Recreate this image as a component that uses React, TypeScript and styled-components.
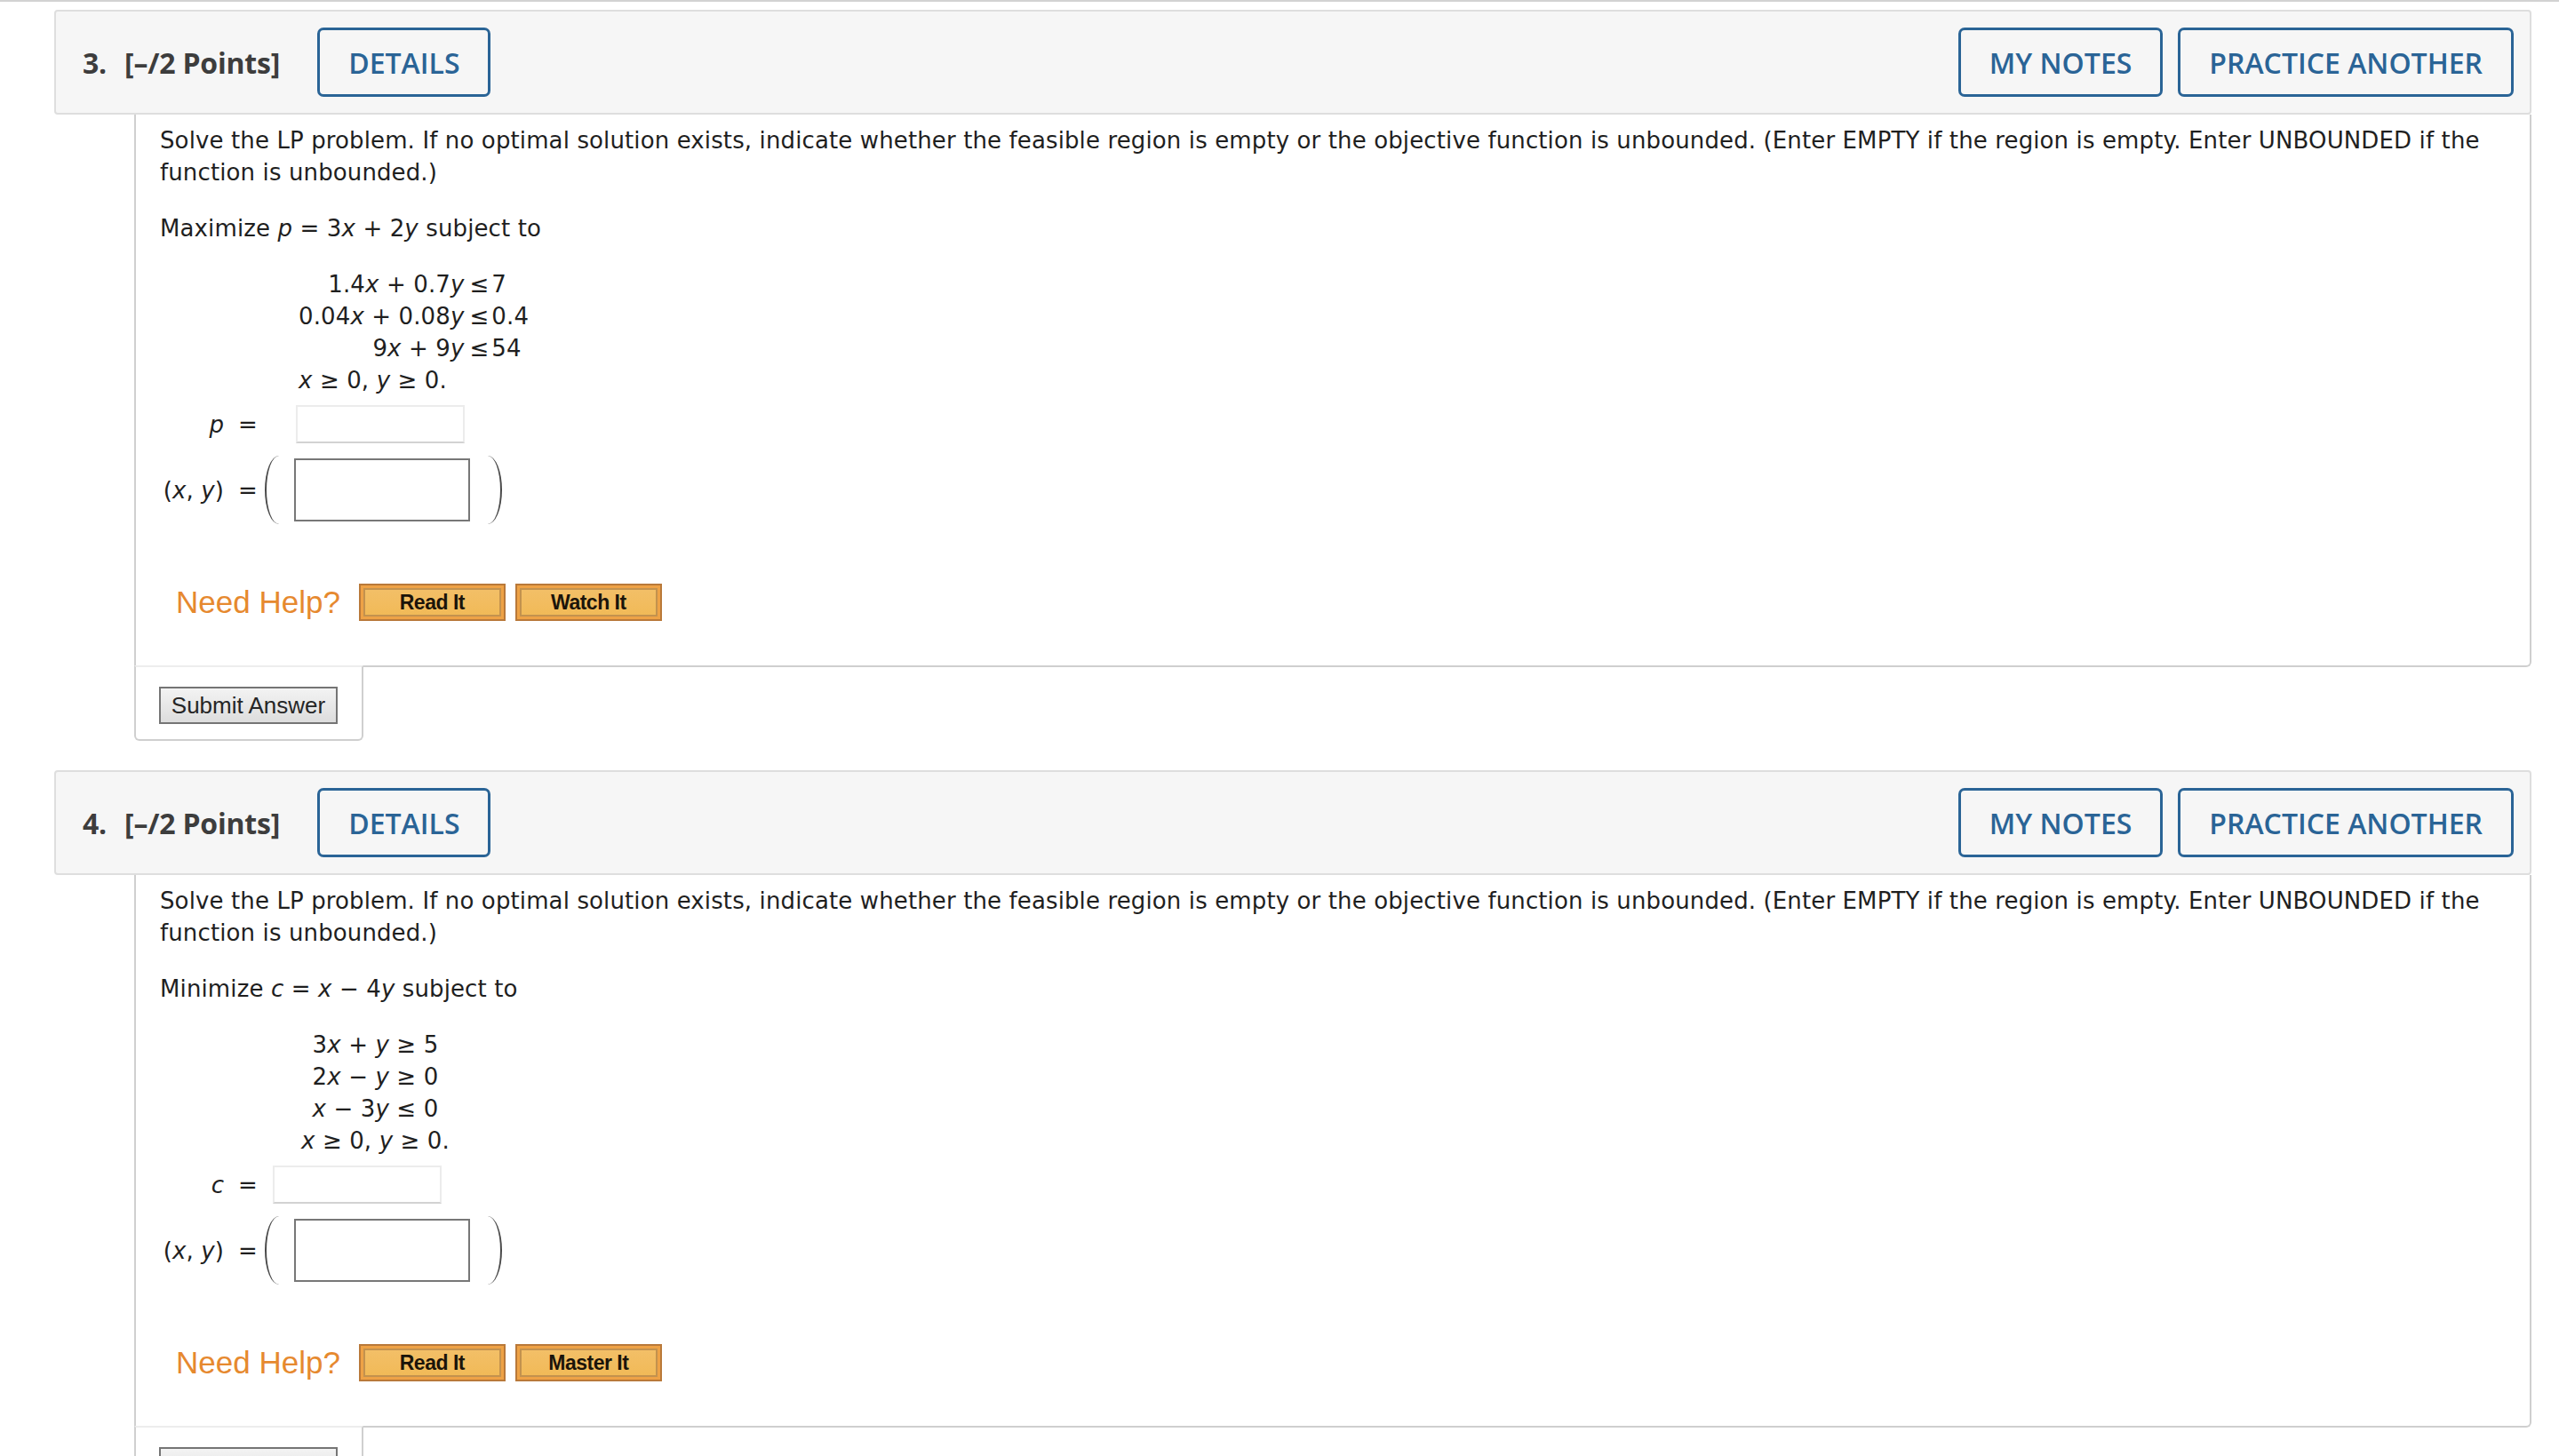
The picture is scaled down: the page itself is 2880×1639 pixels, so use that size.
import React from "react";
import styled, { createGlobalStyle } from "styled-components";

const GlobalStyle = createGlobalStyle`
  html, body {
    margin: 0;
    padding: 0;
    background: #ffffff;
  }
  body {
    font-family: "DejaVu Sans", Verdana, sans-serif;
    color: #222222;
  }
`;

const Page = styled.div`
  width: 2880px;
  box-sizing: border-box;
  border-top: 2px solid #d2d2d2;
  padding: 9px 31px 0 61px;
`;

const ProblemBlock = styled.section`
  margin-bottom: 33px;
`;

const Header = styled.div`
  display: flex;
  align-items: center;
  background: #f6f6f6;
  border: 2px solid #dedede;
  border-radius: 4px;
  padding: 18px 18px 18px 30px;
`;

const Title = styled.div`
  display: flex;
  gap: 20px;
  font-family: "Open Sans", sans-serif;
  font-weight: 700;
  font-size: 32px;
  letter-spacing: -0.2px;
  color: #3d3d3d;
`;

const HeaderButton = styled.button<{ $gap: string }>`
  height: 78px;
  margin-left: ${(p) => p.$gap};
  padding: 0 32px;
  border: 3px solid #2a6496;
  border-radius: 7px;
  background: transparent;
  font-family: "Open Sans", sans-serif;
  font-weight: 600;
  font-size: 32px;
  color: #2a6496;
`;

const Body = styled.div`
  margin-left: 90px;
  border: 2px solid #cfcfcf;
  border-top: none;
  border-radius: 0 0 6px 0;
  padding: 11px 27px 50px 27px;
  font-size: 26px;
  line-height: 36px;
  letter-spacing: 0.12px;
  color: #1f1f1f;
`;

const Para = styled.p`
  margin: 0;
`;

const Objective = styled.p`
  margin: 27px 0 0 0;
`;

const V = styled.span`
  font-style: italic;
`;

const ConstraintGrid = styled.div`
  display: grid;
  grid-template-columns: auto auto auto;
  width: max-content;
  margin: 27px 0 0 156px;
`;

const Lhs = styled.span`
  justify-self: end;
`;

const Op = styled.span`
  padding: 0 3px 0 6px;
`;

const FullRow = styled.span`
  grid-column: 1 / -1;
`;

const ConstraintStack = styled.div`
  display: flex;
  flex-direction: column;
  align-items: center;
  width: max-content;
  margin: 27px 0 0 159px;
`;

const AnswerRow = styled.div<{ $top: number }>`
  display: flex;
  align-items: center;
  margin-top: ${(p) => p.$top}px;
`;

const Label = styled.div`
  display: flex;
  flex-shrink: 0;
  justify-content: flex-end;
  gap: 16px;
  width: 110px;
  white-space: nowrap;
`;

const PlainInput = styled.div<{ $offset: number }>`
  width: 190px;
  height: 43px;
  box-sizing: border-box;
  margin-left: ${(p) => p.$offset}px;
  border: 2px solid #ececec;
  border-bottom-color: #d2d2d2;
`;

const Paren = styled.span<{ $side: "left" | "right"; $gap: number }>`
  width: 16px;
  height: 77px;
  box-sizing: border-box;
  margin-left: ${(p) => p.$gap}px;
  ${(p) =>
    p.$side === "left"
      ? "border-left: 2.5px solid #4a4a4a; border-radius: 100% 0 0 100% / 50% 0 0 50%;"
      : "border-right: 2.5px solid #4a4a4a; border-radius: 0 100% 100% 0 / 0 50% 50% 0;"}
`;

const AnswerBox = styled.div`
  width: 198px;
  height: 71px;
  box-sizing: border-box;
  margin-left: 17px;
  border: 2px solid #777777;
`;

const HelpRow = styled.div`
  display: flex;
  align-items: center;
  gap: 11px;
  margin-top: 67px;
  padding-left: 18px;
`;

const NeedHelp = styled.span`
  margin-right: 10px;
  font-family: "Liberation Sans", Arial, sans-serif;
  font-size: 35px;
  line-height: 42px;
  letter-spacing: 0;
  color: #e6892f;
`;

const HelpButton = styled.button`
  width: 165px;
  height: 42px;
  padding: 0;
  border: 2px solid #b9793a;
  background: linear-gradient(#f3c06a, #f1b955);
  box-shadow: inset 0 0 0 3px #eea246, inset 0 0 0 5px #c3924e;
  font-family: "Liberation Sans", Arial, sans-serif;
  font-weight: 700;
  font-size: 23px;
  letter-spacing: -0.5px;
  color: #1b140a;
`;

const SubmitTab = styled.div`
  width: 258px;
  box-sizing: border-box;
  margin: -2px 0 0 90px;
  border: 2px solid #cfcfcf;
  border-top-color: #ededed;
  border-radius: 0 0 6px 6px;
  padding: 22px 26px 17px 26px;
`;

const SubmitButton = styled.button`
  width: 201px;
  height: 42px;
  padding: 0;
  border: 2px solid #757575;
  background: linear-gradient(#f3f3f3, #dddddd);
  font-family: "Liberation Sans", Arial, sans-serif;
  font-size: 26px;
  color: #262626;
`;

interface ProblemProps {
  number: number;
  objective: React.ReactNode;
  constraints: React.ReactNode;
  varName: string;
  inputOffset: number;
  helpers: string[];
}

const Problem: React.FC<ProblemProps> = ({ number, objective, constraints, varName, inputOffset, helpers }) => (
  <ProblemBlock>
    <Header>
      <Title>
        <span>{number}.</span>
        <span>[–/2 Points]</span>
      </Title>
      <HeaderButton $gap="42px">DETAILS</HeaderButton>
      <HeaderButton $gap="auto">MY NOTES</HeaderButton>
      <HeaderButton $gap="17px">PRACTICE ANOTHER</HeaderButton>
    </Header>
    <Body>
      <Para>
        Solve the LP problem. If no optimal solution exists, indicate whether the feasible region is empty or the
        objective function is unbounded. (Enter EMPTY if the region is empty. Enter UNBOUNDED if the function is
        unbounded.)
      </Para>
      <Objective>{objective}</Objective>
      {constraints}
      <AnswerRow $top={10}>
        <Label>
          <V>{varName}</V>
          <span>=</span>
        </Label>
        <PlainInput $offset={inputOffset} />
      </AnswerRow>
      <AnswerRow $top={14}>
        <Label>
          <span>
            (<V>x</V>, <V>y</V>)
          </span>
          <span>=</span>
        </Label>
        <Paren $side="left" $gap={8} />
        <AnswerBox />
        <Paren $side="right" $gap={20} />
      </AnswerRow>
      <HelpRow>
        <NeedHelp>Need Help?</NeedHelp>
        {helpers.map((h) => (
          <HelpButton key={h}>{h}</HelpButton>
        ))}
      </HelpRow>
    </Body>
    <SubmitTab>
      <SubmitButton>Submit Answer</SubmitButton>
    </SubmitTab>
  </ProblemBlock>
);

const App: React.FC = () => (
  <>
    <GlobalStyle />
    <Page>
      <Problem
        number={3}
        varName="p"
        inputOffset={43}
        helpers={["Read It", "Watch It"]}
        objective={
          <>
            Maximize <V>p</V> = 3<V>x</V> + 2<V>y</V> subject to
          </>
        }
        constraints={
          <ConstraintGrid>
            <Lhs>
              1.4<V>x</V> + 0.7<V>y</V>
            </Lhs>
            <Op>≤</Op>
            <span>7</span>
            <Lhs>
              0.04<V>x</V> + 0.08<V>y</V>
            </Lhs>
            <Op>≤</Op>
            <span>0.4</span>
            <Lhs>
              9<V>x</V> + 9<V>y</V>
            </Lhs>
            <Op>≤</Op>
            <span>54</span>
            <FullRow>
              <V>x</V> ≥ 0, <V>y</V> ≥ 0.
            </FullRow>
          </ConstraintGrid>
        }
      />
      <Problem
        number={4}
        varName="c"
        inputOffset={17}
        helpers={["Read It", "Master It"]}
        objective={
          <>
            Minimize <V>c</V> = <V>x</V> − 4<V>y</V> subject to
          </>
        }
        constraints={
          <ConstraintStack>
            <span>
              3<V>x</V> + <V>y</V> ≥ 5
            </span>
            <span>
              2<V>x</V> − <V>y</V> ≥ 0
            </span>
            <span>
              <V>x</V> − 3<V>y</V> ≤ 0
            </span>
            <span>
              <V>x</V> ≥ 0, <V>y</V> ≥ 0.
            </span>
          </ConstraintStack>
        }
      />
    </Page>
  </>
);

export default App;
